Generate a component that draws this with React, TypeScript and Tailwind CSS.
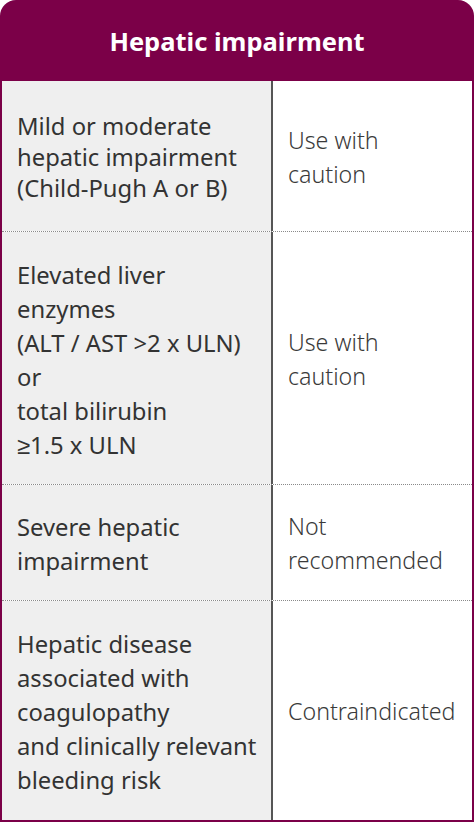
import React from "react";

type Row = { left: string[]; right: string[]; h: string; lead: string };

const rows: Row[] = [
  {
    left: ["Mild or moderate", "hepatic impairment", "(Child-Pugh A or B)"],
    right: ["Use with", "caution"],
    h: "h-[151px]",
    lead: "leading-[31px]",
  },
  {
    left: [
      "Elevated liver",
      "enzymes",
      "(ALT / AST >2 x ULN)",
      "or",
      "total bilirubin",
      "≥1.5 x ULN",
    ],
    right: ["Use with", "caution"],
    h: "h-[253px]",
    lead: "leading-[34px]",
  },
  {
    left: ["Severe hepatic", "impairment"],
    right: ["Not", "recommended"],
    h: "h-[116px]",
    lead: "leading-[34px]",
  },
  {
    left: [
      "Hepatic disease",
      "associated with",
      "coagulopathy",
      "and clinically relevant",
      "bleeding risk",
    ],
    right: ["Contraindicated"],
    h: "h-[219px]",
    lead: "leading-[34px]",
  },
];

export default function App() {
  return (
    <div className="w-[474px] bg-white font-['Noto_Sans',sans-serif]">
      <div className="w-[474px] rounded-t-[16px] overflow-hidden border-b-2 border-[#7b0048] bg-[#7b0048]">
        <div className="h-[81px] flex items-center justify-center text-white font-bold text-[25.5px] pt-[1px]">
          Hepatic impairment
        </div>
        <div className="mx-[2px] bg-white">
          {rows.map((r, i) => (
            <div
              key={i}
              className={`flex ${r.h} ${
                i < rows.length - 1 ? "border-b border-dotted border-[#8a8a8a]" : ""
              }`}
            >
              <div
                className={`w-[271px] shrink-0 bg-[#efefef] border-r-2 border-[#555555] flex items-center px-[15px] pt-[3px] text-[23.8px] ${r.lead} text-[#333333]`}
              >
                <div>
                  {r.left.map((t, j) => (
                    <div key={j} className="whitespace-nowrap">
                      {t}
                    </div>
                  ))}
                </div>
              </div>
              <div className="flex-1 flex items-center pl-[15px] pt-[1px] text-[23.2px] leading-[34px] text-[#3a3a3a] font-light">
                <div>
                  {r.right.map((t, j) => (
                    <div key={j} className="whitespace-nowrap">
                      {t}
                    </div>
                  ))}
                </div>
              </div>
            </div>
          ))}
        </div>
      </div>
    </div>
  );
}
